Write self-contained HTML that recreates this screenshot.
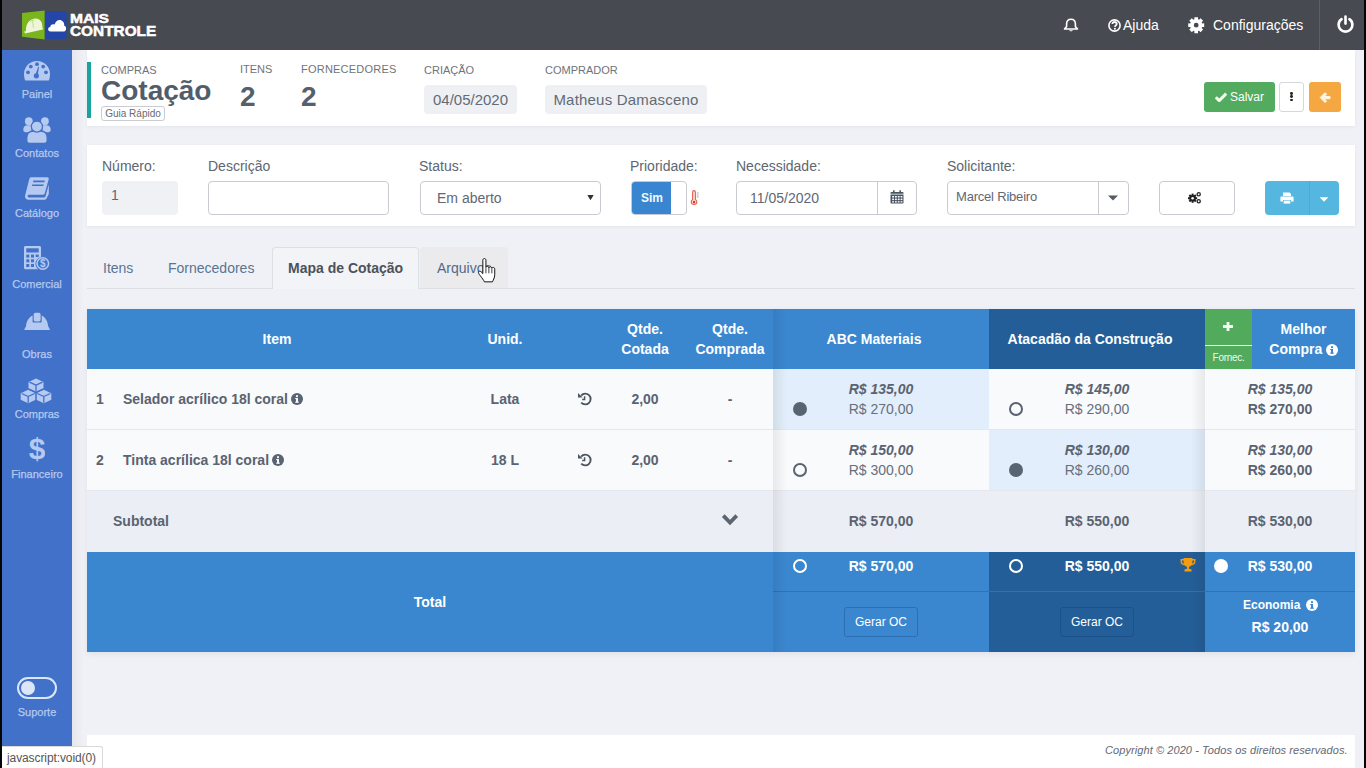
<!DOCTYPE html>
<html><head><meta charset="utf-8">
<style>
*{box-sizing:border-box;margin:0;padding:0}
html,body{width:1366px;height:768px;overflow:hidden;background:#eff1f6;font-family:"Liberation Sans",sans-serif}
.a{position:absolute;white-space:nowrap}
#top{position:absolute;left:0;top:0;width:1366px;height:50px;background:#474a50}
#side{position:absolute;left:0;top:50px;width:72px;height:718px;background:#4171c9;z-index:2}
.nt{position:absolute;left:1px;width:72px;text-align:center;color:#b6c9f0;font-size:11px;line-height:11px;-webkit-text-stroke:.25px #b6c9f0}
.ic{position:absolute;fill:#b6c9f0}
.panel{position:absolute;background:#fff;box-shadow:0 1px 3px rgba(40,50,70,.06)}
.lbl{position:absolute;font-size:14px;line-height:14px;color:#5e6670;white-space:nowrap}
.inp{position:absolute;border:1px solid #c8ccd2;border-radius:4px;background:#fff}
.hd{position:absolute;font-size:11px;line-height:11px;color:#6f737a;white-space:nowrap}
.big{position:absolute;font-size:28px;line-height:28px;font-weight:bold;color:#525d6b}
.th{position:absolute;color:#fff;font-weight:bold;font-size:14px;line-height:20px;text-align:center;white-space:nowrap}
.td{position:absolute;color:#5a6371;font-weight:bold;font-size:14px;line-height:14px;text-align:center;white-space:nowrap}
.tr{position:absolute;color:#666f7b;font-size:14px;line-height:14px;text-align:center;white-space:nowrap}
.ti{position:absolute;color:#5a6371;font-weight:bold;font-style:italic;font-size:14px;line-height:14px;text-align:center;white-space:nowrap}
.tw{position:absolute;color:#fff;font-weight:bold;font-size:14px;line-height:14px;text-align:center;white-space:nowrap}
.rad{position:absolute;width:14px;height:14px;border-radius:50%}
</style></head><body>
<!-- TOP BAR -->
<div id="top">
  <svg class="a" style="left:21px;top:10px" width="46" height="30" viewBox="0 0 46 30">
    <polygon points="1,3 23.6,0.5 23.6,29.6 1,26.8" fill="#7ab51d"/>
    <rect x="24.2" y="1" width="21.4" height="28" fill="#2446a8"/>
    <path d="M5,21 C4.5,14 8.5,9 14,8.5 C18.5,8.2 21.5,11.5 21.3,16.5 L21.3,18.3 L6.5,22 Z" fill="#eef6d8"/>
    <path d="M3.2,21.6 L21.8,17.6 L21.8,19.6 L4,23.6 Z" fill="#eef6d8"/>
    <path d="M9,12 C10,10.5 12,10 13.5,10.2 M11.5,10.5 L12.5,18" fill="none" stroke="#b5d77a" stroke-width=".8"/>
    <path d="M29.5,21.5 C26.5,21.5 26.3,17.2 29.3,17 C29.3,14.6 31.8,13.6 33.6,14.6 C34.6,11 37.5,9.2 40.5,10.5 C42.5,11.4 43.5,13.5 43.2,15.8 C45.8,16.2 45.8,21.5 43,21.5 Z" fill="#fff"/>
  </svg>
  <div class="a" style="left:69.5px;top:12px;color:#fff;font-weight:bold;font-size:13px;line-height:13px;transform:scaleX(1.2);transform-origin:0 0;-webkit-text-stroke:.5px #fff">MAIS</div>
  <div class="a" style="left:69.5px;top:24px;color:#fff;font-weight:bold;font-size:14.5px;line-height:14.5px;transform:scaleX(1.06);transform-origin:0 0;-webkit-text-stroke:.5px #fff">CONTROLE</div>
  <!-- bell -->
  <svg class="a" style="left:1063px;top:18px" width="16" height="14" viewBox="0 0 16 14">
    <path d="M8,1.2 C5,1.2 3.6,3.5 3.6,6 L3.6,8.6 L1.5,11 L14.5,11 L12.4,8.6 L12.4,6 C12.4,3.5 11,1.2 8,1.2 Z" fill="none" stroke="#fff" stroke-width="1.6" stroke-linejoin="round"/>
    <path d="M6.2,12.3 C6.4,13.6 9.6,13.6 9.8,12.3 Z" fill="#fff"/>
  </svg>
  <!-- help -->
  <svg class="a" style="left:1107.5px;top:18.5px" width="13" height="13" viewBox="0 0 13 13">
    <circle cx="6.5" cy="6.5" r="5.6" fill="none" stroke="#fff" stroke-width="1.6"/>
    <path d="M4.4,5.1 C4.4,3.7 5.3,3 6.5,3 C7.8,3 8.7,3.8 8.7,4.9 C8.7,6.3 7,6.4 6.9,7.9" fill="none" stroke="#fff" stroke-width="1.8"/>
    <rect x="6" y="8.9" width="1.8" height="1.7" fill="#fff"/>
  </svg>
  <div class="a" style="left:1123px;top:18px;color:#fff;font-size:14px;line-height:14px">Ajuda</div>
  <!-- gear -->
  <svg class="a" style="left:1188.2px;top:17.2px" width="16.4" height="16.4" viewBox="0 0 16.4 16.4"><path fill="#fff" fill-rule="evenodd" d="M6.39,2.27 L6.36,0.21 L10.04,0.21 L10.01,2.27 L11.11,2.73 L12.55,1.25 L15.15,3.85 L13.67,5.29 L14.13,6.39 L16.19,6.36 L16.19,10.04 L14.13,10.01 L13.67,11.11 L15.15,12.55 L12.55,15.15 L11.11,13.67 L10.01,14.13 L10.04,16.19 L6.36,16.19 L6.39,14.13 L5.29,13.67 L3.85,15.15 L1.25,12.55 L2.73,11.11 L2.27,10.01 L0.21,10.04 L0.21,6.36 L2.27,6.39 L2.73,5.29 L1.25,3.85 L3.85,1.25 L5.29,2.73 Z M10.6,8.2 A2.4,2.4 0 1,0 5.799999999999999,8.2 A2.4,2.4 0 1,0 10.6,8.2 Z"/></svg>
  <div class="a" style="left:1213px;top:18px;color:#fff;font-size:14px;line-height:14px">Configurações</div>
  <div class="a" style="left:1319px;top:0;width:1px;height:50px;background:#5b5e64"></div>
  <!-- power -->
  <svg class="a" style="left:1337px;top:15px" width="17" height="18" viewBox="0 0 17 18">
    <path d="M4.6,4.2 C2.6,5.5 1.6,7.5 1.6,9.8 C1.6,13.6 4.7,16.6 8.5,16.6 C12.3,16.6 15.4,13.6 15.4,9.8 C15.4,7.5 14.4,5.5 12.4,4.2" fill="none" stroke="#fff" stroke-width="2.6" stroke-linecap="round"/>
    <line x1="8.5" y1="1.6" x2="8.5" y2="8.6" stroke="#fff" stroke-width="2.6" stroke-linecap="round"/>
  </svg>
</div>
<!-- SIDEBAR -->
<div id="side">
  <!-- gauge -->
  <svg class="ic" style="left:24px;top:11px" width="26" height="20" viewBox="0 0 26 20">
    <path d="M1.2,19.6 C0.5,18 0,15.5 0,13 C0,5.8 5.8,0 13,0 C20.2,0 26,5.8 26,13 C26,15.5 25.5,18 24.8,19.6 Z"/>
    <g fill="#4171c9"><circle cx="13" cy="3.2" r="1.9"/><circle cx="6.8" cy="5.6" r="1.9"/><circle cx="19.2" cy="5.6" r="1.9"/><circle cx="4" cy="11.3" r="1.9"/><circle cx="22" cy="11.3" r="1.9"/>
    <circle cx="12.4" cy="14.8" r="2.6"/><path d="M11.2,14.5 L14.2,5.8 L15,6 L13.6,15 Z"/></g>
  </svg>
  <div class="nt" style="top:39px">Painel</div>
  <!-- users -->
  <svg class="ic" style="left:23px;top:67px" width="28" height="27" viewBox="0 0 28 27">
    <circle cx="5.8" cy="4.2" r="3.9"/><circle cx="21.9" cy="4.2" r="3.9"/>
    <path d="M0.3,12.5 C0.3,9.8 2,8.3 4.5,8.3 L8.5,8.3 L8.5,15.2 L2.5,15.2 C1.2,15.2 0.3,14.3 0.3,13 Z"/>
    <path d="M27.7,12.5 C27.7,9.8 26,8.3 23.5,8.3 L19.5,8.3 L19.5,15.2 L25.5,15.2 C26.8,15.2 27.7,14.3 27.7,13 Z"/>
    <path d="M3.8,21 C3.8,16.5 6.5,14 10.5,14 L17.5,14 C21.5,14 24.2,16.5 24.2,21 L24.2,23.8 C24.2,25.4 23.2,26.3 21.6,26.3 L6.4,26.3 C4.8,26.3 3.8,25.4 3.8,23.8 Z" stroke="#4171c9" stroke-width="1.3"/>
    <circle cx="13.9" cy="9.6" r="5.6" stroke="#4171c9" stroke-width="1.3"/>
  </svg>
  <div class="nt" style="top:98px">Contatos</div>
  <!-- book -->
  <svg class="ic" style="left:25px;top:127px" width="24" height="23" viewBox="0 0 24 23">
    <path fill-rule="evenodd" d="M6.5,0.3 L22.3,0.3 C23.4,0.3 24,1.2 23.7,2.3 L19.8,16.2 C19.5,17.3 18.6,17.8 17.5,17.8 L4,17.8 C3,17.8 2.4,18.6 2.7,19.5 C3,20.3 3.6,20.6 4.5,20.6 L18.5,20.6 C19.5,20.6 20.2,20 20.5,19.2 L23.8,7.5 L23.8,17 L21.5,21.5 C21,22.4 20.3,22.8 19.3,22.8 L3.5,22.8 C1.5,22.8 0,21.5 0,19.5 C0,18.8 0.1,18.2 0.3,17.7 L4.3,2 C4.6,0.9 5.4,0.3 6.5,0.3 Z M8.4,3.6 L19.8,3.6 L19.4,5.2 L8,5.2 Z M7.3,7.4 L18.7,7.4 L18.3,9 L6.9,9 Z"/>
  </svg>
  <div class="nt" style="top:158px">Catálogo</div>
  <!-- calculator -->
  <svg class="ic" style="left:24px;top:196px" width="26" height="24" viewBox="0 0 26 24">
    <path d="M1.5,0 L15.5,0 C16.3,0 17,0.7 17,1.5 L17,11.2 C13.8,11.8 11.5,14.6 11.5,17.8 C11.5,20 12.5,22 14.2,23.3 L1.5,23.3 C0.7,23.3 0,22.6 0,21.8 L0,1.5 C0,0.7 0.7,0 1.5,0 Z"/>
    <g fill="#4171c9"><rect x="2.3" y="2.3" width="12.4" height="4.2"/>
    <rect x="2.3" y="8.6" width="3" height="3"/><rect x="7" y="8.6" width="3" height="3"/><rect x="11.7" y="8.6" width="3" height="2.4"/>
    <rect x="2.3" y="13.3" width="3" height="3"/><rect x="7" y="13.3" width="3" height="3"/>
    <rect x="2.3" y="18" width="3" height="3"/><rect x="7" y="18" width="3" height="3"/></g>
    <circle cx="18.8" cy="17.5" r="6.5"/>
    <circle cx="18.8" cy="17.5" r="5" fill="#4171c9"/>
    <text x="18.8" y="21.2" font-size="10" font-weight="bold" text-anchor="middle" font-family="Liberation Sans">$</text>
  </svg>
  <div class="nt" style="top:229px">Comercial</div>
  <!-- hard hat -->
  <svg class="ic" style="left:24px;top:262px" width="26" height="19" viewBox="0 0 26 19">
    <rect x="9.7" y="0.8" width="6.9" height="8.6" rx="1.6"/>
    <path d="M0.4,18 C0.4,16.6 1.3,15.6 2,14.6 C2.3,9.2 4.8,5.2 8.6,3.4 L8.6,9.5 C8.6,10.4 9.2,10.6 10,10.6 L16.3,10.6 C17.1,10.6 17.7,10.4 17.7,9.5 L17.7,3.4 C21.5,5.2 23.9,9.2 24.2,14.6 C24.9,15.6 25.8,16.6 25.8,18 Z"/>
  </svg>
  <div class="nt" style="top:299px">Obras</div>
  <!-- cubes -->
  <svg class="ic" style="left:20px;top:328px" width="32" height="26" viewBox="0 0 32 26">
    <path d="M16,0.5 L23.5,4 L23.5,10.5 L16,14 L8.5,10.5 L8.5,4 Z"/>
    <path d="M8.2,11.8 L15.7,15.3 L15.7,21.8 L8.2,25.3 L0.7,21.8 L0.7,15.3 Z"/>
    <path d="M23.8,11.8 L31.3,15.3 L31.3,21.8 L23.8,25.3 L16.3,21.8 L16.3,15.3 Z"/>
    <g fill="none" stroke="#4171c9" stroke-width="1.3" stroke-linejoin="round">
      <path d="M9.5,4.2 L16,7.2 L22.5,4.2 M16,7.2 L16,13.5"/>
      <path d="M1.7,15.5 L8.2,18.5 L14.7,15.5 M8.2,18.5 L8.2,24.8"/>
      <path d="M17.3,15.5 L23.8,18.5 L30.3,15.5 M23.8,18.5 L23.8,24.8"/>
      <path d="M8.5,10.8 L16,14.3 L23.5,10.8 M16,14.3 L16,22.5"/>
    </g>
  </svg>
  <div class="nt" style="top:359px">Compras</div>
  <!-- dollar -->
  <svg class="ic" style="left:29px;top:385px" width="16" height="28" viewBox="0 0 16 28">
    <text x="8" y="24" font-size="30" font-weight="bold" text-anchor="middle" font-family="Liberation Sans">$</text>
  </svg>
  <div class="nt" style="top:419px">Financeiro</div>
  <!-- toggle -->
  <div class="a" style="left:17px;top:627px;width:40px;height:22px;border:2px solid #dde6f8;border-radius:11px"></div>
  <div class="a" style="left:21px;top:631px;width:14px;height:14px;border-radius:50%;background:#dde6f8"></div>
  <div class="nt" style="top:657px">Suporte</div>
</div>
<!-- CONTENT -->
<div class="a" style="left:72px;top:50px;width:12px;height:718px;background:linear-gradient(to right,rgba(0,0,0,.045),rgba(0,0,0,0))"></div>
<!-- header panel -->
<div class="panel" style="left:87px;top:50px;width:1268px;height:76px"></div>
<div class="a" style="left:87px;top:62px;width:4px;height:56px;background:#19a3a0"></div>
<div class="hd" style="left:101px;top:65px">COMPRAS</div>
<div class="big" style="left:101px;top:77px">Cotação</div>
<div class="a" style="left:101px;top:106px;width:64px;height:15px;border:1px solid #c9ccd1;border-radius:3px;font-size:10px;line-height:13px;color:#656b73;text-align:center">Guia Rápido</div>
<div class="hd" style="left:240px;top:64px">ITENS</div>
<div class="big" style="left:240px;top:83px;color:#54606e">2</div>
<div class="hd" style="left:301px;top:64px;letter-spacing:.22px">FORNECEDORES</div>
<div class="big" style="left:301px;top:83px;color:#54606e">2</div>
<div class="hd" style="left:424px;top:65px">CRIAÇÃO</div>
<div class="a" style="left:424px;top:85px;width:93px;height:29px;background:#eef0f4;border-radius:4px;font-size:15px;line-height:29px;color:#626b76;text-align:center">04/05/2020</div>
<div class="hd" style="left:545px;top:65px">COMPRADOR</div>
<div class="a" style="left:545px;top:85px;width:162px;height:29px;background:#eef0f4;border-radius:4px;font-size:15px;letter-spacing:.2px;line-height:29px;color:#626b76;text-align:center">Matheus Damasceno</div>
<!-- buttons -->
<div class="a" style="left:1204px;top:82px;width:71px;height:30px;background:#52ab5f;border-radius:3px"></div>
<svg class="a" style="left:1215px;top:92px" width="12" height="10" viewBox="0 0 12 10"><path d="M0.8,5.2 L4.2,8.6 L11.2,1.6" fill="none" stroke="#effbe9" stroke-width="3" stroke-linejoin="round"/></svg>
<div class="a" style="left:1230px;top:91px;color:#fff;font-size:12px;line-height:12px">Salvar</div>
<div class="a" style="left:1279px;top:82px;width:25px;height:30px;background:#fff;border:1px solid #d4d7dc;border-radius:3px"></div>
<div class="a" style="left:1290px;top:91.8px;width:2.8px;height:2.8px;background:#222;border-radius:50%"></div>
<div class="a" style="left:1290px;top:95.2px;width:2.8px;height:2.8px;background:#222;border-radius:50%"></div>
<div class="a" style="left:1290px;top:98.6px;width:2.8px;height:2.8px;background:#222;border-radius:50%"></div>
<div class="a" style="left:1309px;top:82px;width:32px;height:30px;background:#f5a742;border-radius:3px"></div>
<svg class="a" style="left:1319px;top:91px" width="12" height="13" viewBox="0 0 12 13"><path d="M1.2,6.5 L6,1.7 L7.6,3.3 L5.2,5.5 L11,5.5 L11,7.7 L5.2,7.7 L7.6,9.9 L6,11.5 Z" fill="#fff6e6" stroke="#fff6e6" stroke-width="1" stroke-linejoin="round"/></svg>

<!-- form panel -->
<div class="panel" style="left:87px;top:145px;width:1268px;height:81px"></div>
<div class="lbl" style="left:102px;top:159px">Número:</div>
<div class="lbl" style="left:208px;top:159px">Descrição</div>
<div class="lbl" style="left:419px;top:159px">Status:</div>
<div class="lbl" style="left:630px;top:159px">Prioridade:</div>
<div class="lbl" style="left:736px;top:159px">Necessidade:</div>
<div class="lbl" style="left:947px;top:159px">Solicitante:</div>
<div class="a" style="left:102px;top:181px;width:76px;height:34px;background:#eff1f5;border-radius:4px;font-size:14px;line-height:14px;color:#5f6873;padding:7px 0 0 9px">1</div>
<div class="inp" style="left:208px;top:181px;width:181px;height:34px"></div>
<div class="inp" style="left:420px;top:181px;width:181px;height:34px;font-size:14px;line-height:14px;color:#5f6873;padding:9px 0 0 16px">Em aberto</div>
<svg class="a" style="left:587px;top:194px" width="7" height="7" viewBox="0 0 7 7"><path d="M0.3,1 L6.7,1 L3.5,6.3 Z" fill="#333"/></svg>
<div class="inp" style="left:631px;top:181px;width:56px;height:34px"></div>
<div class="a" style="left:632px;top:182px;width:39px;height:32px;background:#3a85cf;border-radius:3px 0 0 3px;color:#f0fbff;font-weight:bold;font-size:12px;line-height:32px;text-align:center;padding-left:1px">Sim</div>
<svg class="a" style="left:690px;top:189.5px" width="10" height="15" viewBox="0 0 10 15">
  <path d="M2.6,2.3 C2.6,1.1 3.3,0.6 4,0.6 C4.7,0.6 5.4,1.1 5.4,2.3 L5.4,9.6 C6.3,10.1 6.8,11 6.8,12 C6.8,13.4 5.6,14.4 4,14.4 C2.4,14.4 1.2,13.4 1.2,12 C1.2,11 1.7,10.1 2.6,9.6 Z" fill="#fbe3dc" stroke="#e8604c" stroke-width="1.1"/>
  <circle cx="4" cy="12" r="1.2" fill="#d9332a"/>
  <path d="M6.8,3 L8.6,3 M6.8,5 L8.6,5 M6.8,7 L8.6,7" stroke="#8d8f94" stroke-width=".8"/>
</svg>
<div class="inp" style="left:736px;top:181px;width:181px;height:34px;font-size:14px;line-height:14px;color:#5f6873;padding:9px 0 0 13px">11/05/2020</div>
<div class="a" style="left:877px;top:182px;width:1px;height:32px;background:#c8ccd2"></div>
<svg class="a" style="left:890px;top:190px" width="14" height="14" viewBox="0 0 14 14">
  <path d="M0.5,4.5 L13.5,4.5 L13.5,12.8 C13.5,13.3 13.2,13.6 12.7,13.6 L1.3,13.6 C0.8,13.6 0.5,13.3 0.5,12.8 Z M1.3,2 L12.7,2 C13.2,2 13.5,2.3 13.5,2.8 L13.5,3.7 L0.5,3.7 L0.5,2.8 C0.5,2.3 0.8,2 1.3,2 Z" fill="#4a5562"/>
  <rect x="3" y="0.3" width="1.6" height="2.8" fill="#4a5562"/><rect x="9.4" y="0.3" width="1.6" height="2.8" fill="#4a5562"/>
  <g fill="#fff"><rect x="2.2" y="6" width="1.8" height="1.5"/><rect x="5" y="6" width="1.8" height="1.5"/><rect x="7.8" y="6" width="1.8" height="1.5"/><rect x="10.6" y="6" width="1.8" height="1.5"/>
  <rect x="2.2" y="8.6" width="1.8" height="1.5"/><rect x="5" y="8.6" width="1.8" height="1.5"/><rect x="7.8" y="8.6" width="1.8" height="1.5"/><rect x="10.6" y="8.6" width="1.8" height="1.5"/>
  <rect x="2.2" y="11.2" width="1.8" height="1.3"/><rect x="5" y="11.2" width="1.8" height="1.3"/><rect x="7.8" y="11.2" width="1.8" height="1.3"/><rect x="10.6" y="11.2" width="1.8" height="1.3"/></g>
</svg>
<div class="inp" style="left:947px;top:181px;width:182px;height:34px;font-size:13px;line-height:13px;color:#5f6873;letter-spacing:-.2px;padding:8px 0 0 8px">Marcel Ribeiro</div>
<div class="a" style="left:1098px;top:182px;width:1px;height:32px;background:#c8ccd2"></div>
<svg class="a" style="left:1108px;top:195px" width="10" height="6" viewBox="0 0 10 6"><path d="M0,0.5 L10,0.5 L5,5.5 Z" fill="#555c66"/></svg>
<div class="inp" style="left:1159px;top:181px;width:76px;height:34px"></div>
<svg class="a" style="left:1188px;top:192px" width="14" height="12" viewBox="0 0 14 12">
  <g fill="#222">
  <circle cx="4.6" cy="6.2" r="3.3"/>
  <g transform="translate(4.6,6.2)">
    <rect x="-1" y="-4.6" width="2" height="9.2"/><rect x="-1" y="-4.6" width="2" height="9.2" transform="rotate(45)"/>
    <rect x="-1" y="-4.6" width="2" height="9.2" transform="rotate(90)"/><rect x="-1" y="-4.6" width="2" height="9.2" transform="rotate(135)"/>
  </g></g>
  <circle cx="4.6" cy="6.2" r="1.3" fill="#fff"/>
  <circle cx="10.7" cy="2.3" r="1.6" fill="none" stroke="#222" stroke-width="1.3"/>
  <circle cx="10.7" cy="9.3" r="1.6" fill="none" stroke="#222" stroke-width="1.3"/>
</svg>
<div class="a" style="left:1265px;top:181px;width:74px;height:34px;background:#55b7e0;border-radius:4px"></div>
<div class="a" style="left:1309px;top:181px;width:1px;height:34px;background:#4eaad3"></div>
<svg class="a" style="left:1280px;top:192px" width="14" height="12" viewBox="0 0 14 12">
  <path d="M3,0.5 L9.5,0.5 L11,2 L11,4 L3,4 Z" fill="#fff"/>
  <path d="M1.5,4.6 L12.5,4.6 C13.2,4.6 13.6,5 13.6,5.7 L13.6,9.5 L11,9.5 L11,8 L3,8 L3,9.5 L0.4,9.5 L0.4,5.7 C0.4,5 0.8,4.6 1.5,4.6 Z" fill="#fff"/>
  <rect x="3.7" y="8.6" width="6.6" height="3" fill="#fff"/>
</svg>
<svg class="a" style="left:1319px;top:197px" width="10" height="5" viewBox="0 0 10 5"><path d="M0.5,0.2 L9.5,0.2 L5,4.8 Z" fill="#fff"/></svg>

<!-- tabs -->
<div class="a" style="left:87px;top:288px;width:1268px;height:1px;background:#dcdfe4"></div>
<div class="a" style="left:272px;top:247px;width:147px;height:42px;background:#f3f4f7;border:1px solid #dcdfe4;border-bottom:none;border-radius:4px 4px 0 0"></div>
<div class="a" style="left:420px;top:247px;width:88px;height:41px;background:#ebebed;border-radius:4px 4px 0 0"></div>
<div class="lbl" style="left:103px;top:261px;color:#587595">Itens</div>
<div class="lbl" style="left:168px;top:261px;color:#587595">Fornecedores</div>
<div class="lbl" style="left:288px;top:261px;color:#4b525b;font-weight:bold">Mapa de Cotação</div>
<div class="lbl" style="left:437px;top:261px;color:#4f6a8a">Arquivos</div>
<!-- cursor -->
<svg class="a" style="left:477px;top:258px;z-index:6" width="19.8" height="27" viewBox="0 0 22 30">
  <path d="M6.5,2.5 C6.5,1.2 7.3,0.6 8.2,0.6 C9.1,0.6 9.9,1.2 9.9,2.5 L9.9,10.5 C10.2,9.6 10.9,9.3 11.6,9.3 C12.4,9.3 13.1,9.9 13.2,10.9 C13.5,10.1 14.2,9.8 14.9,9.8 C15.8,9.8 16.4,10.5 16.5,11.4 C16.8,10.8 17.4,10.5 18,10.5 C19,10.5 19.7,11.3 19.7,12.4 L19.7,18.5 C19.7,22 17.7,25.3 17.2,26.5 L8.2,26.5 C7.5,24.8 5.5,22 3.5,19.5 C2,17.6 1.2,16.2 1.8,15.2 C2.5,14.2 3.8,14.5 5,15.8 L6.5,17.3 Z" fill="#fff" stroke="#111" stroke-width="1.1"/>
  <path d="M9.9,11 L9.9,17 M13.2,11 L13.2,17 M16.5,11.6 L16.5,17" stroke="#111" stroke-width=".9"/>
</svg>
<!-- TABLE -->
<div class="a" style="left:87px;top:309px;width:1268px;height:343px;box-shadow:0 2px 6px rgba(40,50,70,.08)"></div>
<!-- header -->
<div class="a" style="left:87px;top:309px;width:1268px;height:60px;background:#3a87d0"></div>
<div class="a" style="left:989px;top:309px;width:216px;height:60px;background:#245e98"></div>
<div class="a" style="left:1205px;top:309px;width:47px;height:36px;background:#52ab5d"></div>
<div class="a" style="left:1205px;top:345px;width:47px;height:1px;background:#e8f4ea"></div>
<div class="a" style="left:1205px;top:346px;width:47px;height:23px;background:#52ab5d"></div>
<div class="th" style="left:227px;top:329px;width:100px">Item</div>
<div class="th" style="left:455px;top:329px;width:100px">Unid.</div>
<div class="th" style="left:595px;top:319px;width:100px;line-height:20px">Qtde.<br>Cotada</div>
<div class="th" style="left:680px;top:319px;width:100px;line-height:20px">Qtde.<br>Comprada</div>
<div class="th" style="left:766px;top:329px;width:216px">ABC Materiais</div>
<div class="th" style="left:982px;top:329px;width:216px">Atacadão da Construção</div>
<svg class="a" style="left:1223px;top:322px" width="10" height="9" viewBox="0 0 10 9"><path d="M3.6,0 L6.4,0 L6.4,3.1 L10,3.1 L10,5.9 L6.4,5.9 L6.4,9 L3.6,9 L3.6,5.9 L0,5.9 L0,3.1 L3.6,3.1 Z" fill="#f2fbf2"/></svg>
<div class="a" style="left:1205px;top:352.5px;width:47px;text-align:center;color:#eefbe9;font-size:10px;line-height:10px;letter-spacing:-.3px">Fornec.</div>
<div class="th" style="left:1252px;top:319px;width:103px;line-height:20px">Melhor<br>Compra&nbsp;&nbsp;&nbsp;&nbsp;</div>
<svg class="a" style="left:1326px;top:344px" width="12" height="12" viewBox="0 0 12 12"><circle cx="6" cy="6" r="6" fill="#fff"/><rect x="5" y="5" width="2" height="4.5" fill="#3a87d0"/><rect x="4.2" y="5" width="2.8" height="1.1" fill="#3a87d0"/><rect x="4.2" y="8.6" width="3.6" height="1.1" fill="#3a87d0"/><circle cx="6" cy="3.2" r="1.1" fill="#3a87d0"/></svg>
<!-- rows -->
<div class="a" style="left:87px;top:369px;width:1268px;height:122px;background:#f9fafc"></div>
<div class="a" style="left:773px;top:369px;width:216px;height:60px;background:#e2eefb"></div>
<div class="a" style="left:989px;top:430px;width:216px;height:61px;background:#e2eefb"></div>
<div class="a" style="left:87px;top:429px;width:1268px;height:1px;background:#e4e7ec"></div>
<div class="a" style="left:87px;top:490px;width:1268px;height:1px;background:#e4e7ec"></div>
<div class="a" style="left:87px;top:491px;width:1268px;height:61px;background:#ebeef4"></div>

<div class="td" style="left:96px;top:392px">1</div>
<div class="td" style="left:123px;top:392px">Selador acrílico 18l coral</div>
<svg class="a" style="left:291px;top:393px" width="12" height="12" viewBox="0 0 12 12"><circle cx="6" cy="6" r="6" fill="#5a6371"/><rect x="5" y="5" width="2" height="4.5" fill="#f9fafc"/><rect x="4.2" y="5" width="2.8" height="1.1" fill="#f9fafc"/><rect x="4.2" y="8.6" width="3.6" height="1.1" fill="#f9fafc"/><circle cx="6" cy="3.2" r="1.1" fill="#f9fafc"/></svg>
<div class="td" style="left:455px;top:392px;width:100px">Lata</div>
<svg class="a" style="left:577px;top:392px" width="15" height="14" viewBox="0 0 15 14"><path d="M4.2,3.6 C5.2,2.3 6.6,1.6 8.2,1.6 C11.2,1.6 13.6,4 13.6,7 C13.6,10 11.2,12.4 8.2,12.4 C6.6,12.4 5.2,11.7 4.2,10.6" fill="none" stroke="#4d5561" stroke-width="1.9"/><path d="M1,1 L1,5.6 L5.6,5.6 Z" fill="#4d5561"/><path d="M7.6,4.2 L7.6,7.5 L5.2,7.5" fill="none" stroke="#4d5561" stroke-width="1.5"/></svg>
<div class="td" style="left:595px;top:392px;width:100px">2,00</div>
<div class="td" style="left:680px;top:392px;width:100px">-</div>

<div class="td" style="left:96px;top:453px">2</div>
<div class="td" style="left:123px;top:453px">Tinta acrílica 18l coral</div>
<svg class="a" style="left:272px;top:454px" width="12" height="12" viewBox="0 0 12 12"><circle cx="6" cy="6" r="6" fill="#5a6371"/><rect x="5" y="5" width="2" height="4.5" fill="#f9fafc"/><rect x="4.2" y="5" width="2.8" height="1.1" fill="#f9fafc"/><rect x="4.2" y="8.6" width="3.6" height="1.1" fill="#f9fafc"/><circle cx="6" cy="3.2" r="1.1" fill="#f9fafc"/></svg>
<div class="td" style="left:455px;top:453px;width:100px">18 L</div>
<svg class="a" style="left:577px;top:453px" width="15" height="14" viewBox="0 0 15 14"><path d="M4.2,3.6 C5.2,2.3 6.6,1.6 8.2,1.6 C11.2,1.6 13.6,4 13.6,7 C13.6,10 11.2,12.4 8.2,12.4 C6.6,12.4 5.2,11.7 4.2,10.6" fill="none" stroke="#4d5561" stroke-width="1.9"/><path d="M1,1 L1,5.6 L5.6,5.6 Z" fill="#4d5561"/><path d="M7.6,4.2 L7.6,7.5 L5.2,7.5" fill="none" stroke="#4d5561" stroke-width="1.5"/></svg>
<div class="td" style="left:595px;top:453px;width:100px">2,00</div>
<div class="td" style="left:680px;top:453px;width:100px">-</div>

<div class="ti" style="left:831px;top:382px;width:100px">R$ 135,00</div>
<div class="tr" style="left:831px;top:402px;width:100px">R$ 270,00</div>
<div class="rad" style="left:793px;top:402px;background:#5a6371"></div>
<div class="ti" style="left:1047px;top:382px;width:100px">R$ 145,00</div>
<div class="tr" style="left:1047px;top:402px;width:100px">R$ 290,00</div>
<div class="rad" style="left:1009px;top:402px;border:2px solid #5a6371"></div>
<div class="ti" style="left:1230px;top:382px;width:100px">R$ 135,00</div>
<div class="td" style="left:1230px;top:402px;width:100px">R$ 270,00</div>

<div class="ti" style="left:831px;top:443px;width:100px">R$ 150,00</div>
<div class="tr" style="left:831px;top:463px;width:100px">R$ 300,00</div>
<div class="rad" style="left:793px;top:463px;border:2px solid #5a6371"></div>
<div class="ti" style="left:1047px;top:443px;width:100px">R$ 130,00</div>
<div class="tr" style="left:1047px;top:463px;width:100px">R$ 260,00</div>
<div class="rad" style="left:1009px;top:463px;background:#5a6371"></div>
<div class="ti" style="left:1230px;top:443px;width:100px">R$ 130,00</div>
<div class="td" style="left:1230px;top:463px;width:100px">R$ 260,00</div>

<div class="td" style="left:113px;top:514px">Subtotal</div>
<svg class="a" style="left:721px;top:513px" width="18" height="14" viewBox="0 0 18 14"><path d="M2.3,2.6 L9,9.6 L15.7,2.6" fill="none" stroke="#5c6470" stroke-width="3.7"/></svg>
<div class="td" style="left:831px;top:514px;width:100px">R$ 570,00</div>
<div class="td" style="left:1047px;top:514px;width:100px">R$ 550,00</div>
<div class="td" style="left:1230px;top:514px;width:100px">R$ 530,00</div>

<!-- total -->
<div class="a" style="left:87px;top:552px;width:1268px;height:100px;background:#3a87d0"></div>
<div class="a" style="left:989px;top:552px;width:216px;height:100px;background:#245e98"></div>
<div class="a" style="left:773px;top:591px;width:582px;height:1px;background:#2f72b6"></div>
<div class="tw" style="left:380px;top:595px;width:100px">Total</div>
<div class="rad" style="left:793px;top:559px;border:2px solid #fff"></div>
<div class="tw" style="left:831px;top:559px;width:100px">R$ 570,00</div>
<div class="rad" style="left:1009px;top:559px;border:2px solid #fff"></div>
<div class="tw" style="left:1047px;top:559px;width:100px">R$ 550,00</div>
<svg class="a" style="left:1180px;top:557px" width="16" height="15" viewBox="0 0 16 15">
  <path d="M3.5,1 L12.5,1 L12.5,2 L15.5,2 L15.5,4.5 C15.5,7 13.5,8.2 11.5,8.3 C10.8,9.2 9.8,9.8 9,10 L9,11.8 L11.5,12.5 L11.5,14.5 L4.5,14.5 L4.5,12.5 L7,11.8 L7,10 C6.2,9.8 5.2,9.2 4.5,8.3 C2.5,8.2 0.5,7 0.5,4.5 L0.5,2 L3.5,2 Z M2,3.5 L2,4.6 C2,5.7 2.8,6.6 3.8,6.8 C3.6,5.8 3.5,4.6 3.5,3.5 Z M14,3.5 L12.5,3.5 C12.5,4.6 12.4,5.8 12.2,6.8 C13.2,6.6 14,5.7 14,4.6 Z" fill="#f39c12"/>
</svg>
<div class="rad" style="left:1214px;top:559px;background:#fff"></div>
<div class="tw" style="left:1230px;top:559px;width:100px">R$ 530,00</div>
<div class="a" style="left:844px;top:607px;width:74px;height:30px;border:1px solid #2a6fb3;border-radius:3px;color:#fff;font-size:12px;line-height:28px;text-align:center">Gerar OC</div>
<div class="a" style="left:1060px;top:607px;width:74px;height:30px;border:1px solid #1d5189;border-radius:3px;color:#fff;font-size:12px;line-height:28px;text-align:center">Gerar OC</div>
<div class="a" style="left:1243px;top:599px;color:#fff;font-weight:bold;font-size:12px;line-height:12px">Economia</div>
<svg class="a" style="left:1306px;top:599px" width="12" height="12" viewBox="0 0 12 12"><circle cx="6" cy="6" r="6" fill="#fff"/><rect x="5" y="5" width="2" height="4.5" fill="#3a87d0"/><rect x="4.2" y="5" width="2.8" height="1.1" fill="#3a87d0"/><rect x="4.2" y="8.6" width="3.6" height="1.1" fill="#3a87d0"/><circle cx="6" cy="3.2" r="1.1" fill="#3a87d0"/></svg>
<div class="tw" style="left:1230px;top:620px;width:100px">R$ 20,00</div>

<!-- column shadows -->
<div class="a" style="left:773px;top:309px;width:14px;height:343px;background:linear-gradient(to right,rgba(0,0,0,.07),rgba(0,0,0,0))"></div>
<div class="a" style="left:1191px;top:369px;width:14px;height:283px;background:linear-gradient(to left,rgba(0,0,0,.07),rgba(0,0,0,0))"></div>

<!-- footer -->
<div class="a" style="left:87px;top:735px;width:1268px;height:33px;background:#fff"></div>
<div class="a" style="left:1105px;top:745px;color:#5f6873;font-size:11px;line-height:11px;font-style:italic;letter-spacing:.08px">Copyright © 2020 - Todos os direitos reservados.</div>
<!-- status tooltip -->
<div class="a" style="left:2px;top:746px;width:101px;height:22px;background:#fff;border:1px solid #d9d9d9;border-left:none;border-bottom:none;border-radius:0 3px 0 0;z-index:6;font-size:12px;line-height:12px;color:#555;padding:5px 0 0 5px;letter-spacing:-.1px">javascript:void(0)</div>
<!-- edges -->
<div class="a" style="left:0;top:0;width:2px;height:768px;background:#050505;z-index:5"></div>
<div class="a" style="left:1364px;top:0;width:2px;height:768px;background:#050505;z-index:5"></div>
</body></html>
